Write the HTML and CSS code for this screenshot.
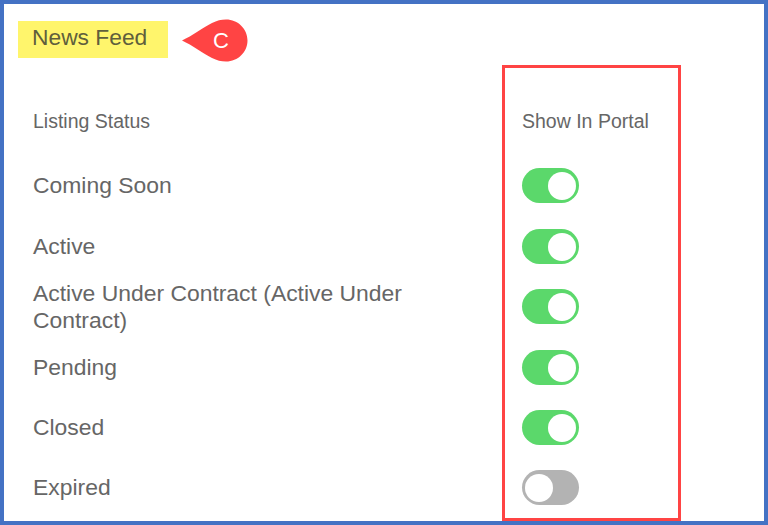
FILE: index.html
```html
<!DOCTYPE html>
<html lang="en">
<head>
<meta charset="utf-8">
<title>News Feed</title>
<link rel="stylesheet" href="styles.css">
</head>
<body>
<main class="frame">
  <header class="head">
    <h1 class="title">News Feed</h1>
    <span class="pin">
      <svg class="pin-shape" width="66" height="43" viewBox="0 0 66 43"><path d="M0 21.5C10 17 22 8 30 4C35 1.500 39 .5 44 .5C56 .5 65.500 10 65.500 21.500C65.500 33 56 42.500 44 42.500C39 42.500 35 41.500 30 39C22 35 10 26 0 21.500Z" fill="#ff4444"/></svg>
      <span class="pin-label">C</span>
    </span>
  </header>
  <section class="table">
    <div class="row row-head"><span class="col-head">Listing Status</span><span class="col-head col-right">Show In Portal</span></div>
    <div class="row"><span class="name">Coming Soon</span><span class="toggle on"></span></div>
    <div class="row"><span class="name">Active</span><span class="toggle on"></span></div>
    <div class="row"><span class="name">Active Under Contract (Active Under Contract)</span><span class="toggle on"></span></div>
    <div class="row"><span class="name">Pending</span><span class="toggle on"></span></div>
    <div class="row"><span class="name">Closed</span><span class="toggle on"></span></div>
    <div class="row"><span class="name">Expired</span><span class="toggle off"></span></div>
  </section>
  <div class="mark"></div>
</main>
</body>
</html>
```
FILE: styles.css
```css
* { box-sizing: border-box; }
html, body { margin: 0; padding: 0; background: #fff; }
body { width: 768px; height: 525px; overflow: hidden; font-family: "Liberation Sans", Arial, sans-serif; color: #666; }
.frame { position: relative; width: 768px; height: 525px; border: 4px solid #4472c4; padding: 17px 0 0 14px; background: #fff; }
.head { display: flex; align-items: center; gap: 14px; height: 37px; }
.title { margin: 0; width: 150px; height: 37px; padding: 2px 0 0 14px; background: #fff56c; font-size: 22.800px; line-height: 29px; font-weight: 400; color: #5f5f3c; }
.pin { position: relative; display: block; width: 66px; height: 43px; margin-top: 2px; }
.pin-shape { display: block; }
.pin-label { position: absolute; left: 31px; top: 9px; width: 16px; text-align: center; font-size: 22px; line-height: 26px; color: #fff; }
.table { display: flex; flex-direction: column; padding: 32px 0 0 15px; }
.row { display: grid; grid-template-columns: 489px 1fr; align-items: center; height: 60.400px; }
.row-head { height: 62px; margin-bottom: 3.700px; }
.col-head { font-size: 19.500px; line-height: 22px; color: #666; }
.name { width: 420px; font-size: 22.900px; line-height: 27px; color: #666; }
.toggle { position: relative; display: block; width: 57px; height: 35px; border-radius: 18px; }
.toggle::after { content: ""; position: absolute; top: 4px; width: 28px; height: 28px; border-radius: 50%; background: #fff; }
.toggle.on { background: #5bd86b; }
.toggle.on::after { right: 3px; }
.toggle.off { background: #b3b3b3; }
.toggle.off::after { left: 3px; }
.mark { position: absolute; left: 498px; top: 61px; width: 179px; height: 456px; border: 3px solid #ff4444; }
```
